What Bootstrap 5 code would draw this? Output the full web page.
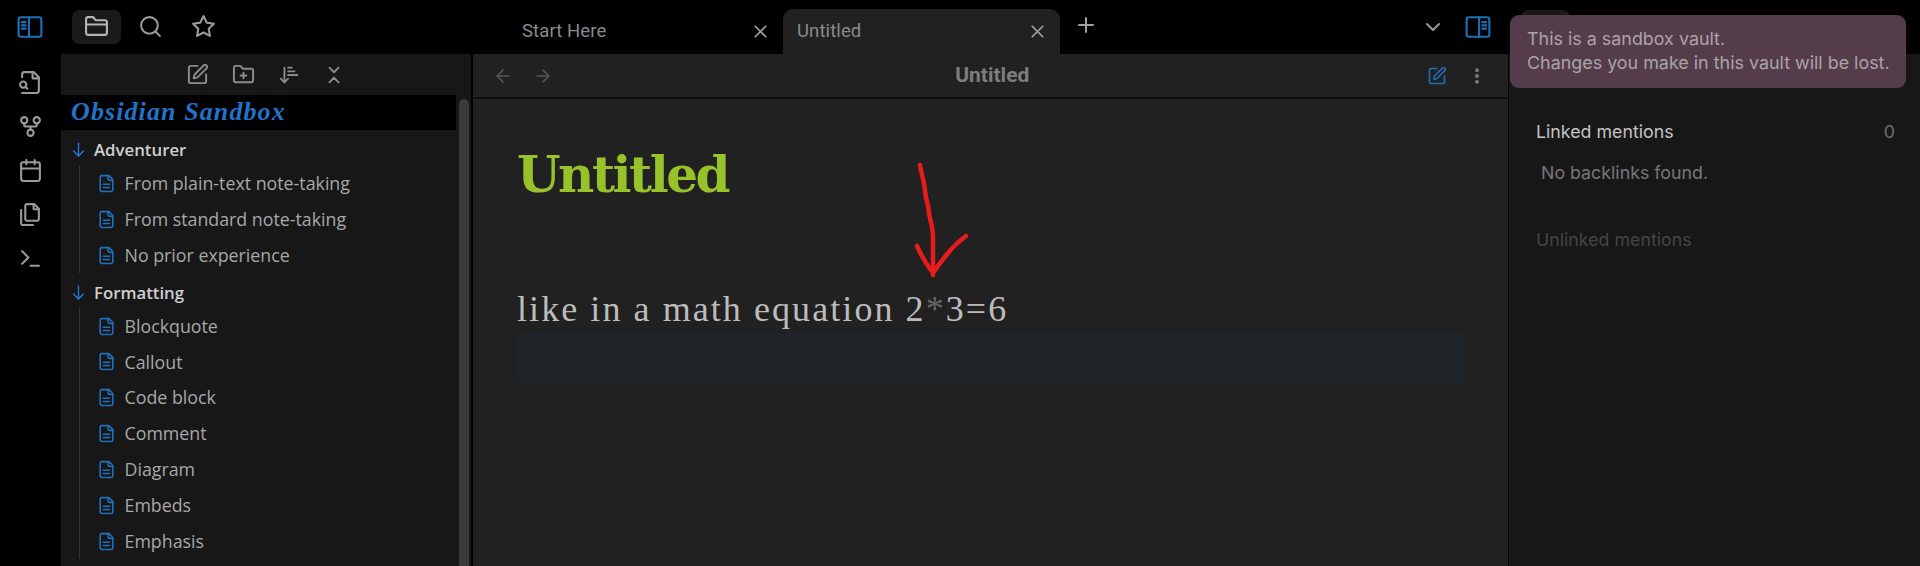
<!DOCTYPE html>
<html lang="en">
<head>
<meta charset="utf-8">
<title>Untitled - Obsidian Sandbox</title>
<link href="https://cdn.jsdelivr.net/npm/bootstrap@5.3.0/dist/css/bootstrap.min.css" rel="stylesheet">
<style>
html,body{height:566px;overflow:hidden;background:#000;}
.app{height:566px;position:relative;font-family:"Open Sans","Noto Sans",sans-serif;}
.ico{fill:none;stroke:currentColor;stroke-width:2;stroke-linecap:round;stroke-linejoin:round;flex:none;display:block;}
.sprite{width:0;height:0;position:absolute;}
.titlebar{height:54px;background:#000;color:#9a9a9a;}
.left-head{width:473px;padding-left:17px;}
.tog{color:#1f6db5;}
.tool-tab{width:49px;height:34px;border-radius:7px;margin-top:-1px;margin-left:3.500px;}
.tool-tab.on{background:#1a1a1a;color:#b5b5b5;margin-left:29px;}
.tool-tab.on + .tool-tab{margin-left:5px;}
.tabstrip{width:948px;padding-left:30px;}
.doc-tab{width:277px;height:45px;margin-top:9px;padding:0 12px 0 14px;color:#8a8a8a;font:18.500px/1 Roboto,sans-serif;letter-spacing:.1px;}
.doc-tab.off{width:280px;padding-left:19px;}
.doc-tab.on{background:#212121;border-radius:10px 10px 0 0;}
.doc-tab .ico{color:#a0a0a0;}
.plus{color:#a0a0a0;margin-left:14px;margin-top:-5px;}
.right-head{position:relative;}
.side-btn{margin-left:20px;}
.hidden-tab{width:49px;height:34px;background:#1a1a1a;border-radius:7px;margin-left:30px;}
.ribbon{width:61px;background:#000;color:#9a9a9a;padding-top:16px;gap:19px;}
.main-row{height:512px;}
.files{width:412px;background:#171717;position:relative;border-right:2px solid #000;}
.files-tools{height:41px;color:#8c8c8c;padding-left:124.500px;gap:23px;}
.tree-wrap{padding-right:15px;}
.brand{height:35px;background:#000;padding-left:10px;color:#2172c9;font:italic bold 26px/33px "Liberation Serif",serif;letter-spacing:1.100px;}
.tree{padding-top:2px;}
.tree-head{height:35.850px;color:#cfcfcf;font-size:16.800px;font-weight:600;padding-left:9px;gap:7px;}
.arrow-blue{color:#2477d2;}
.tree-kids{margin:-2px 0 1px 18px;border-left:1px solid #333;}
.tree-item{height:35.850px;color:#a8a8a8;font-size:17.800px;padding-left:17px;gap:8.500px;white-space:nowrap;}
.tree-item .ico{color:#2170bd;}
.scrolltrack{position:absolute;right:2px;top:45px;bottom:0;width:10px;background:#3a3a3a;border-radius:5px 5px 0 0;}
.editor{width:1036px;background:#212121;border-right:1px solid #000;position:relative;}
.editor-head{height:45px;border-bottom:2px solid #0e0e0e;padding:0 21px 0 19.500px;color:#555;}
.editor-title{font:bold 21px/1 Roboto,sans-serif;color:#7d7d7d;}
.editor-nav{gap:20px;width:65px;}
.editor-acts{gap:20px;color:#7d7d7d;}
.editor-acts .pen{color:#1f6db5;}
.editor-body{padding:46px 43px 0 44px;}
.note-h{font:bold 50px/60px "DejaVu Serif",serif;color:#98c22a;margin:0 0 81px;letter-spacing:-2.500px;}
.note-p{font:36px/46.600px "Liberation Serif",serif;color:#bcbcbc;margin:0;letter-spacing:2.070px;}
.note-p .star{color:#666;}
.codeblk{height:50px;background:#1f2428;border-radius:3px;}
.scribble{position:absolute;left:430px;top:107px;width:70px;height:125px;}
.panel{flex:1;background:#171717;padding:65.500px 25px 0 27px;font-family:Inter,sans-serif;font-size:17.800px;}
.lm{color:#c4c4c4;height:26px;}
.lm .cnt{color:#6e6e6e;}
.nob{color:#777;padding-left:5px;margin-top:14px;}
.ulm{color:#454545;margin-top:41px;}
.notice{position:absolute;left:1510px;top:15px;width:396px;height:73px;background:#553c4a;color:#aba3a8;border-radius:9px;padding:12px 17px;font:17.900px/24px Inter,sans-serif;z-index:5;white-space:nowrap;}
</style>
</head>
<body>
<svg class="sprite" aria-hidden="true">
<symbol id="i-folder" viewBox="0 0 24 24"><path d="M4 20h16a2 2 0 0 0 2-2V8a2 2 0 0 0-2-2h-7.930a2 2 0 0 1-1.660-.9l-.82-1.200A2 2 0 0 0 7.930 3H4a2 2 0 0 0-2 2v13c0 1.100.9 2 2 2Z"/><path d="M2 10h20"/></symbol>
<symbol id="i-search" viewBox="0 0 24 24"><circle cx="11" cy="11" r="8"/><path d="m21 21-4.300-4.300"/></symbol>
<symbol id="i-star" viewBox="0 0 24 24"><polygon points="12 2 15.090 8.260 22 9.270 17 14.140 18.180 21.020 12 17.770 5.820 21.020 7 14.140 2 9.270 8.910 8.260 12 2"/></symbol>
<symbol id="i-fsearch" viewBox="0 0 24 24"><path d="M4 22h14a2 2 0 0 0 2-2V7l-5-5H6a2 2 0 0 0-2 2v3"/><polyline points="14 2 14 8 20 8"/><circle cx="5" cy="14" r="3"/><path d="m9 18-1.500-1.500"/></symbol>
<symbol id="i-fork" viewBox="0 0 24 24"><circle cx="12" cy="18" r="3"/><circle cx="6" cy="6" r="3"/><circle cx="18" cy="6" r="3"/><path d="M18 9v2c0 .6-.4 1-1 1H7c-.6 0-1-.4-1-1V9"/><path d="M12 12v3"/></symbol>
<symbol id="i-cal" viewBox="0 0 24 24"><rect x="3" y="4" width="18" height="18" rx="2"/><path d="M16 2v4M8 2v4M3 10h18"/></symbol>
<symbol id="i-files" viewBox="0 0 24 24"><path d="M15.500 2H8.600c-.4 0-.8.2-1.100.5-.3.3-.5.7-.5 1.100v12.800c0 .4.2.8.5 1.100.3.3.7.5 1.100.5h9.800c.4 0 .8-.2 1.100-.5.3-.3.5-.7.5-1.100V6.500L15.500 2z"/><path d="M3 7.600v12.800c0 .4.2.8.5 1.100.3.3.7.5 1.100.5h9.800"/><path d="M15 2v5h5"/></symbol>
<symbol id="i-term" viewBox="0 0 24 24"><polyline points="4 17 10 11 4 5"/><path d="M12 19h8"/></symbol>
<symbol id="i-pen" viewBox="0 0 24 24"><path d="M12 3H5a2 2 0 0 0-2 2v14a2 2 0 0 0 2 2h14a2 2 0 0 0 2-2v-7"/><path d="M18.400 2.600a2.120 2.120 0 0 1 3 3L12 15l-4 1 1-4Z"/></symbol>
<symbol id="i-fplus" viewBox="0 0 24 24"><path d="M12 10v6M9 13h6"/><path d="M20 20a2 2 0 0 0 2-2V8a2 2 0 0 0-2-2h-7.900a2 2 0 0 1-1.690-.9L9.600 3.900A2 2 0 0 0 7.930 3H4a2 2 0 0 0-2 2v13a2 2 0 0 0 2 2Z"/></symbol>
<symbol id="i-sort" viewBox="0 0 24 24"><path d="m3 16 4 4 4-4"/><path d="M7 20V4"/><path d="M11 4h4M11 8h7M11 12h10"/></symbol>
<symbol id="i-collapse" viewBox="0 0 24 24"><path d="m7 20 5-5 5 5"/><path d="m7 4 5 5 5-5"/></symbol>
<symbol id="i-file" viewBox="0 0 24 24"><path d="M15 2H6a2 2 0 0 0-2 2v16a2 2 0 0 0 2 2h12a2 2 0 0 0 2-2V7Z"/><path d="M14 2v4a2 2 0 0 0 2 2h4"/><path d="M16 13H8M16 17H8"/></symbol>
<symbol id="i-down" viewBox="0 0 24 24"><path d="M12 3v18"/><path d="m5 14 7 7 7-7"/></symbol>
<symbol id="i-left" viewBox="0 0 24 24"><path d="m12 19-7-7 7-7"/><path d="M19 12H5"/></symbol>
<symbol id="i-right" viewBox="0 0 24 24"><path d="M5 12h14"/><path d="m12 5 7 7-7 7"/></symbol>
<symbol id="i-x" viewBox="0 0 24 24"><path d="M18 6 6 18M6 6l12 12"/></symbol>
<symbol id="i-plus" viewBox="0 0 24 24"><path d="M5 12h14M12 5v14"/></symbol>
<symbol id="i-chev" viewBox="0 0 24 24"><path d="m6 9 6 6 6-6"/></symbol>
<symbol id="i-dots" viewBox="0 0 24 24"><circle cx="12" cy="5" r="1.300" fill="currentColor"/><circle cx="12" cy="12" r="1.300" fill="currentColor"/><circle cx="12" cy="19" r="1.300" fill="currentColor"/></symbol>
<symbol id="i-sideL" viewBox="0 0 24 24"><rect x="1.500" y="3" width="21" height="18" rx="2"/><path d="M11 3v18M4.500 7.500H8M4.500 10.500H8M4.500 13.500H8"/></symbol>
<symbol id="i-sideR" viewBox="0 0 24 24"><rect x="1.500" y="3" width="21" height="18" rx="2"/><path d="M13 3v18M16 7.500h3.500M16 10.500h3.500M16 13.500h3.500"/></symbol>
</svg>

<div class="app d-flex flex-column">
  <header class="titlebar d-flex">
    <div class="left-head d-flex align-items-center">
      <svg class="ico tog" width="26" height="26" stroke-width="1.600"><use href="#i-sideL"/></svg>
      <div class="tool-tab on d-flex align-items-center justify-content-center"><svg class="ico" width="25" height="25" stroke-width="1.600"><use href="#i-folder"/></svg></div>
      <div class="tool-tab d-flex align-items-center justify-content-center"><svg class="ico" width="25" height="25" stroke-width="1.600"><use href="#i-search"/></svg></div>
      <div class="tool-tab d-flex align-items-center justify-content-center"><svg class="ico" width="25" height="25" stroke-width="1.600"><use href="#i-star"/></svg></div>
    </div>
    <div class="tabstrip d-flex">
      <div class="doc-tab off d-flex align-items-center justify-content-between"><span>Start Here</span><svg class="ico" width="21" height="21" stroke-width="1.500"><use href="#i-x"/></svg></div>
      <div class="doc-tab on d-flex align-items-center justify-content-between"><span>Untitled</span><svg class="ico" width="21" height="21" stroke-width="1.500"><use href="#i-x"/></svg></div>
      <div class="plus d-flex align-items-center"><svg class="ico" width="24" height="24" stroke-width="1.500"><use href="#i-plus"/></svg></div>
    </div>
    <div class="right-head d-flex align-items-center">
      <svg class="ico" width="24" height="24" stroke-width="1.500"><use href="#i-chev"/></svg>
      <svg class="ico tog side-btn" width="26" height="26" stroke-width="1.600"><use href="#i-sideR"/></svg>
      <div class="hidden-tab"></div>
    </div>
  </header>

  <div class="main-row d-flex">
    <nav class="ribbon d-flex flex-column align-items-center">
      <svg class="ico" width="25" height="25" stroke-width="1.600"><use href="#i-fsearch"/></svg>
      <svg class="ico" width="25" height="25" stroke-width="1.600"><use href="#i-fork"/></svg>
      <svg class="ico" width="25" height="25" stroke-width="1.600"><use href="#i-cal"/></svg>
      <svg class="ico" width="25" height="25" stroke-width="1.600"><use href="#i-files"/></svg>
      <svg class="ico" width="25" height="25" stroke-width="1.600"><use href="#i-term"/></svg>
    </nav>

    <aside class="files d-flex flex-column">
      <div class="files-tools d-flex align-items-center">
        <svg class="ico" width="23" height="23" stroke-width="1.700"><use href="#i-pen"/></svg>
        <svg class="ico" width="23" height="23" stroke-width="1.700"><use href="#i-fplus"/></svg>
        <svg class="ico" width="22" height="22" stroke-width="1.700"><use href="#i-sort"/></svg>
        <svg class="ico" width="22" height="22" stroke-width="1.700"><use href="#i-collapse"/></svg>
      </div>
      <div class="tree-wrap">
        <div class="brand">Obsidian Sandbox</div>
        <div class="tree">
          <div class="tree-head d-flex align-items-center"><svg class="ico arrow-blue" width="17" height="17" stroke-width="3.800"><use href="#i-down"/></svg><span>Adventurer</span></div>
          <div class="tree-kids">
            <div class="tree-item d-flex align-items-center"><svg class="ico" width="19" height="19" stroke-width="2"><use href="#i-file"/></svg><span>From plain-text note-taking</span></div>
            <div class="tree-item d-flex align-items-center"><svg class="ico" width="19" height="19" stroke-width="2"><use href="#i-file"/></svg><span>From standard note-taking</span></div>
            <div class="tree-item d-flex align-items-center"><svg class="ico" width="19" height="19" stroke-width="2"><use href="#i-file"/></svg><span>No prior experience</span></div>
          </div>
          <div class="tree-head d-flex align-items-center"><svg class="ico arrow-blue" width="17" height="17" stroke-width="3.800"><use href="#i-down"/></svg><span>Formatting</span></div>
          <div class="tree-kids">
            <div class="tree-item d-flex align-items-center"><svg class="ico" width="19" height="19" stroke-width="2"><use href="#i-file"/></svg><span>Blockquote</span></div>
            <div class="tree-item d-flex align-items-center"><svg class="ico" width="19" height="19" stroke-width="2"><use href="#i-file"/></svg><span>Callout</span></div>
            <div class="tree-item d-flex align-items-center"><svg class="ico" width="19" height="19" stroke-width="2"><use href="#i-file"/></svg><span>Code block</span></div>
            <div class="tree-item d-flex align-items-center"><svg class="ico" width="19" height="19" stroke-width="2"><use href="#i-file"/></svg><span>Comment</span></div>
            <div class="tree-item d-flex align-items-center"><svg class="ico" width="19" height="19" stroke-width="2"><use href="#i-file"/></svg><span>Diagram</span></div>
            <div class="tree-item d-flex align-items-center"><svg class="ico" width="19" height="19" stroke-width="2"><use href="#i-file"/></svg><span>Embeds</span></div>
            <div class="tree-item d-flex align-items-center"><svg class="ico" width="19" height="19" stroke-width="2"><use href="#i-file"/></svg><span>Emphasis</span></div>
          </div>
        </div>
      </div>
      <div class="scrolltrack"></div>
    </aside>

    <main class="editor">
      <div class="editor-head d-flex align-items-center justify-content-between">
        <div class="editor-nav d-flex"><svg class="ico" width="20" height="20" stroke-width="1.600"><use href="#i-left"/></svg><svg class="ico" width="20" height="20" stroke-width="1.600"><use href="#i-right"/></svg></div>
        <div class="editor-title">Untitled</div>
        <div class="editor-acts d-flex align-items-center"><svg class="ico pen" width="20" height="20" stroke-width="2"><use href="#i-pen"/></svg><svg class="ico" width="20" height="20" stroke-width="2"><use href="#i-dots"/></svg></div>
      </div>
      <div class="editor-body">
        <h1 class="note-h">Untitled</h1>
        <p class="note-p">like in a math equation 2<span class="star">*</span>3=6</p>
        <div class="codeblk"></div>
      </div>
      <svg class="scribble" viewBox="0 0 70 125" fill="none" stroke="#e81c1c" stroke-width="4.500" stroke-linecap="round" stroke-linejoin="round" aria-hidden="true">
        <path d="M17 4C19 16 22 24 22 30C23 40 26 45 26 53C28 62 30 68 30 75C30 88 30 100 30 114"/>
        <path d="M14 85C18 94 24 104 30 112C34 106 40 98 45 92C50 86 56 80 63 75"/>
      </svg>
    </main>

    <aside class="panel">
      <div class="lm d-flex justify-content-between align-items-center"><span>Linked mentions</span><span class="cnt">0</span></div>
      <div class="nob">No backlinks found.</div>
      <div class="ulm">Unlinked mentions</div>
    </aside>
  </div>

  <div class="notice">This is a sandbox vault.<br>Changes you make in this vault will be lost.</div>
</div>
<script src="https://cdn.jsdelivr.net/npm/bootstrap@5.3.0/dist/js/bootstrap.bundle.min.js"></script>
</body>
</html>
